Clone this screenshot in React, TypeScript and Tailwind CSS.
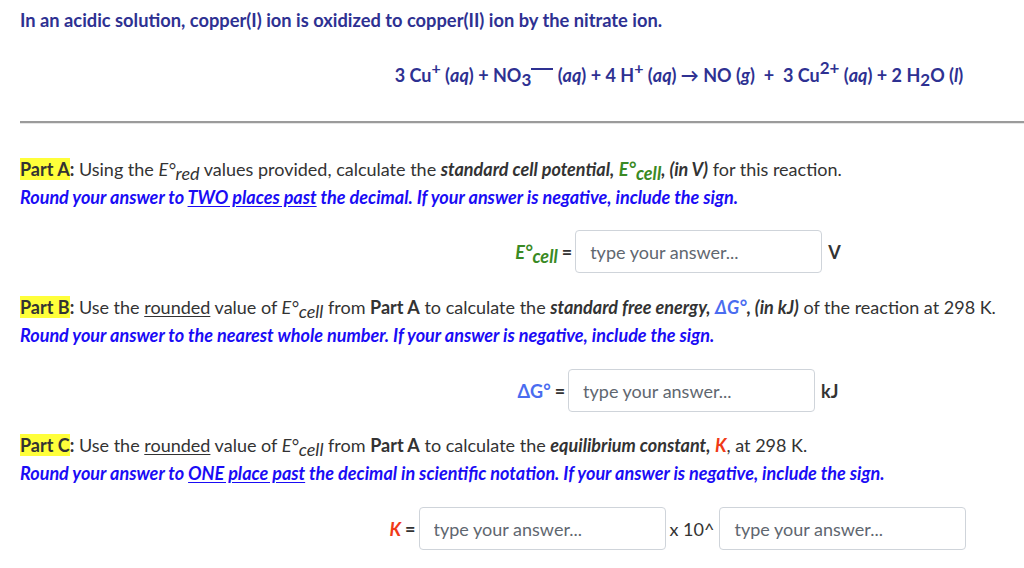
import React from "react";

const font = { fontFamily: "Lato, 'Open Sans', sans-serif" };

function Hl({ children }: { children: React.ReactNode }) {
  return <span className="bg-[#ffff3a] font-bold">{children}</span>;
}

function Ecell({ color = "" }: { color?: string }) {
  return (
    <span className={`italic ${color}`}>
      E°<sub className="text-[1em] relative top-[4px] align-baseline">cell</sub>
    </span>
  );
}

function AnswerInput({ width = "w-[247px]" }: { width?: string }) {
  return (
    <input
      type="text"
      placeholder="type your answer..."
      className={`${width} h-[43px] rounded-[4px] border border-[#cfd4da] bg-white px-[14px] text-[18px] text-[#333] placeholder:text-[#5f6770] outline-none`}
    />
  );
}

export default function App() {
  return (
    <div className="w-[1024px] h-[568px] bg-white text-[#333] overflow-hidden" style={font}>
      <div className="pl-[20px] pt-[10px]">
        <p className="text-[18.3px] font-bold text-[#2e3192] leading-[20px]">
          In an acidic solution, copper(I) ion is oxidized to copper(II) ion by the nitrate ion.
        </p>
        <div className="flex justify-center pl-[314px] mt-[35px] text-[18px] font-bold text-[#2e3192] leading-[20px]">
          <span>
            3 Cu<sup className="text-[16px]">+</sup> (<i>aq</i>) + NO<sub className="text-[17px] relative top-[4px]">3</sub>
            <span className="inline-block w-[22px] border-t-2 border-[#2e3192] align-middle -translate-y-[8px]" /> (<i>aq</i>) + 4 H
            <sup className="text-[16px]">+</sup> (<i>aq</i>) → NO (<i>g</i>) &nbsp;+&nbsp; 3 Cu<sup className="text-[17px]">2+</sup> (<i>aq</i>) + 2 H
            <sub className="text-[17px] relative top-[4px]">2</sub>O (<i>l</i>)
          </span>
        </div>
        <div className="mt-[36px] h-[3px] border-t-2 border-[#9b9b9b] bg-[#e6e6e6]" />
      </div>

      <div className="pl-[20px] text-[18px] leading-[28px]">
        <p className="mt-[31px]">
          <Hl>Part A</Hl>
          <b>:</b> Using the <i>E°</i>
          <sub className="text-[1em] relative top-[4px] align-baseline italic">red</sub> values provided, calculate the{" "}
          <b className="italic">standard cell potential,</b>{" "}
          <b className="text-[#3a8a24]">
            <Ecell />
          </b>
          <b className="italic">, (in V)</b> for this reaction.
        </p>
        <p className="font-bold italic text-[#1a0cf5]">
          Round your answer to <span className="underline underline-offset-2">TWO places past</span> the decimal. If your answer is negative, include the sign.
        </p>

        <div className="flex justify-center items-center pl-[312px] mt-[19px]">
          <span className="font-bold text-[#3a8a24] mr-[4px]">
            <Ecell />
          </span>
          <span className="font-bold mr-[3px]">=</span>
          <AnswerInput />
          <span className="ml-[6px] font-bold">V</span>
        </div>

        <p className="mt-[20px]">
          <Hl>Part B</Hl>
          <b>:</b> Use the <span className="underline underline-offset-2">rounded</span> value of <Ecell /> from <b>Part A</b> to calculate the{" "}
          <b className="italic">standard free energy,</b> <b className="italic text-[#4a6cf0]">ΔG°</b>
          <b className="italic">, (in kJ)</b> of the reaction at 298 K.
        </p>
        <p className="font-bold italic text-[#1a0cf5]">
          Round your answer to the nearest whole number. If your answer is negative, include the sign.
        </p>

        <div className="flex justify-center items-center pl-[312px] mt-[20px]">
          <span className="font-bold text-[#4a6cf0] mr-[4px]">ΔG°</span>
          <span className="font-bold mr-[3px]">=</span>
          <AnswerInput />
          <span className="ml-[6px] font-bold">kJ</span>
        </div>

        <p className="mt-[19px]">
          <Hl>Part C</Hl>
          <b>:</b> Use the <span className="underline underline-offset-2">rounded</span> value of <Ecell /> from <b>Part A</b> to calculate the{" "}
          <b className="italic">equilibrium constant,</b> <b className="italic text-[#f03a17]">K</b>, at 298 K.
        </p>
        <p className="font-bold italic text-[#1a0cf5]">
          Round your answer to <span className="underline underline-offset-2">ONE place past</span> the decimal in scientific notation. If your answer is negative, include the sign.
        </p>

        <div className="flex justify-center items-center pl-[312px] mt-[20px]">
          <span className="font-bold italic text-[#f03a17] mr-[4px]">K</span>
          <span className="font-bold mr-[3px]">=</span>
          <AnswerInput />
          <span className="ml-[4px] mr-[5px]">x 10^</span>
          <AnswerInput />
        </div>
      </div>
    </div>
  );
}
